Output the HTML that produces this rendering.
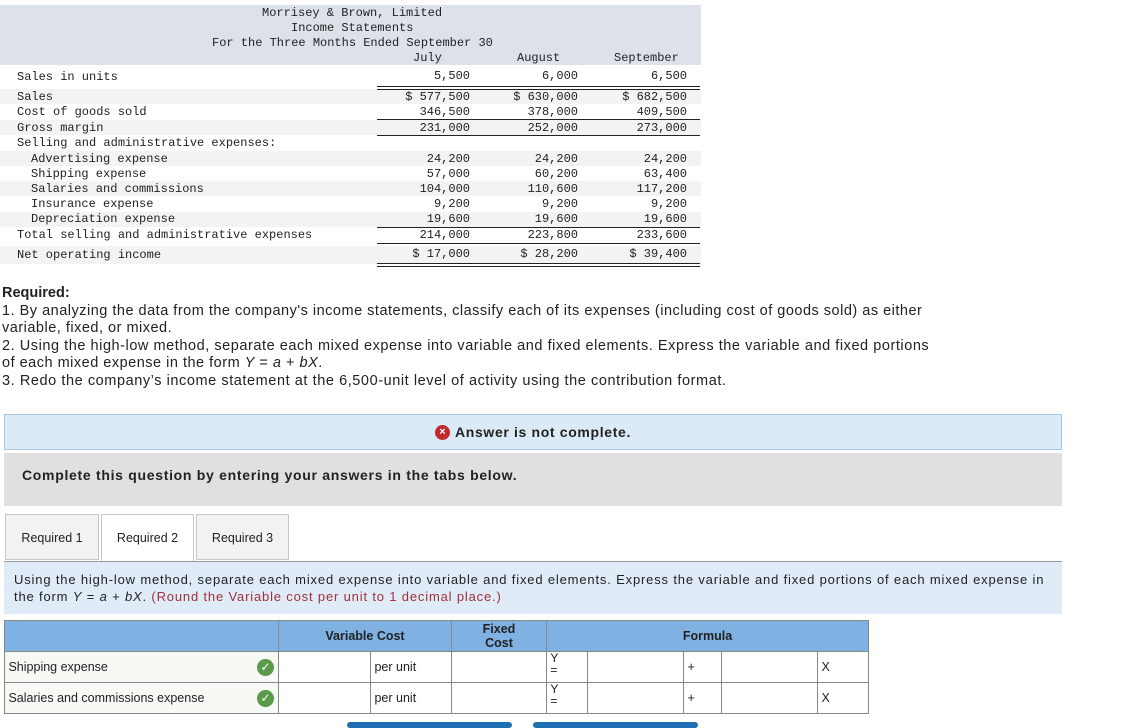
<!DOCTYPE html>
<html><head><meta charset="utf-8"><style>
body{margin:0;width:1132px;height:725px;overflow:hidden;background:#fff;position:relative;font-family:"Liberation Sans",sans-serif}
.a{position:absolute}
.m{position:absolute;font-family:"Liberation Mono",monospace;font-size:12px;color:#222;white-space:pre;line-height:14px}
.r{text-align:right;width:100px}
.hl{position:absolute;height:1px;background:#222}
.t{font-size:14.5px;color:#222;line-height:17.5px;letter-spacing:0.5px;white-space:nowrap}
.tab{position:absolute;top:514px;height:46px;border:1px solid #c6c6c6;background:#f2f2f2;font-size:12.5px;color:#222;line-height:46px;text-align:center;box-sizing:border-box}
td{border:1px solid #888;padding:0;font-size:12.5px;color:#222}
.bg{position:absolute;left:0;width:701px;background:#f3f3f3}
</style></head><body>
<div class="a" style="left:0;top:5px;width:701px;height:60px;background:#dde1e9"></div>
<div class="bg" style="top:89px;height:15px"></div>
<div class="bg" style="top:120px;height:15px"></div>
<div class="bg" style="top:151px;height:15px"></div>
<div class="bg" style="top:181px;height:15px"></div>
<div class="bg" style="top:212px;height:15px"></div>
<div class="bg" style="top:246px;height:18px"></div>
<div class="m" style="left:262px;top:6px">Morrisey &amp; Brown, Limited</div>
<div class="m" style="left:291px;top:21px">Income Statements</div>
<div class="m" style="left:212px;top:36px">For the Three Months Ended September 30</div>
<div class="m" style="left:413px;top:51px">July</div>
<div class="m" style="left:517px;top:51px">August</div>
<div class="m" style="left:614px;top:51px">September</div>

<div class="m" style="left:17px;top:70px">Sales in units</div>
<div class="m r" style="left:370px;top:69px">5,500</div><div class="m r" style="left:478px;top:69px">6,000</div><div class="m r" style="left:587px;top:69px">6,500</div>

<div class="m" style="left:17px;top:90px">Sales</div>
<div class="m r" style="left:370px;top:90px">$ 577,500</div><div class="m r" style="left:478px;top:90px">$ 630,000</div><div class="m r" style="left:587px;top:90px">$ 682,500</div>

<div class="m" style="left:17px;top:105px">Cost of goods sold</div>
<div class="m r" style="left:370px;top:105px">346,500</div><div class="m r" style="left:478px;top:105px">378,000</div><div class="m r" style="left:587px;top:105px">409,500</div>

<div class="m" style="left:17px;top:121px">Gross margin</div>
<div class="m r" style="left:370px;top:121px">231,000</div><div class="m r" style="left:478px;top:121px">252,000</div><div class="m r" style="left:587px;top:121px">273,000</div>

<div class="m" style="left:17px;top:136px">Selling and administrative expenses:</div>

<div class="m" style="left:31px;top:152px">Advertising expense</div>
<div class="m r" style="left:370px;top:152px">24,200</div><div class="m r" style="left:478px;top:152px">24,200</div><div class="m r" style="left:587px;top:152px">24,200</div>

<div class="m" style="left:31px;top:167px">Shipping expense</div>
<div class="m r" style="left:370px;top:167px">57,000</div><div class="m r" style="left:478px;top:167px">60,200</div><div class="m r" style="left:587px;top:167px">63,400</div>

<div class="m" style="left:31px;top:182px">Salaries and commissions</div>
<div class="m r" style="left:370px;top:182px">104,000</div><div class="m r" style="left:478px;top:182px">110,600</div><div class="m r" style="left:587px;top:182px">117,200</div>

<div class="m" style="left:31px;top:197px">Insurance expense</div>
<div class="m r" style="left:370px;top:197px">9,200</div><div class="m r" style="left:478px;top:197px">9,200</div><div class="m r" style="left:587px;top:197px">9,200</div>

<div class="m" style="left:31px;top:212px">Depreciation expense</div>
<div class="m r" style="left:370px;top:212px">19,600</div><div class="m r" style="left:478px;top:212px">19,600</div><div class="m r" style="left:587px;top:212px">19,600</div>

<div class="m" style="left:17px;top:228px">Total selling and administrative expenses</div>
<div class="m r" style="left:370px;top:228px">214,000</div><div class="m r" style="left:478px;top:228px">223,800</div><div class="m r" style="left:587px;top:228px">233,600</div>

<div class="m" style="left:17px;top:248px">Net operating income</div>
<div class="m r" style="left:370px;top:247px">$ 17,000</div><div class="m r" style="left:478px;top:247px">$ 28,200</div><div class="m r" style="left:587px;top:247px">$ 39,400</div>

<div class="hl" style="left:377px;top:86px;width:323px"></div><div class="hl" style="left:377px;top:89px;width:323px"></div>
<div class="hl" style="left:377px;top:119px;width:323px"></div>
<div class="hl" style="left:377px;top:135px;width:323px"></div>
<div class="hl" style="left:377px;top:227px;width:323px"></div>
<div class="hl" style="left:377px;top:243px;width:323px"></div>
<div class="hl" style="left:377px;top:263px;width:323px"></div><div class="hl" style="left:377px;top:266px;width:323px"></div>

<div class="a t" style="left:2px;top:285px"><b style="letter-spacing:0">Required:</b><br>1. By analyzing the data from the company's income statements, classify each of its expenses (including cost of goods sold) as either<br>variable, fixed, or mixed.<br><span style="letter-spacing:0.55px">2. Using the high-low method, separate each mixed expense into variable and fixed elements. Express the variable and fixed portions</span><br>of each mixed expense in the form <i>Y</i> = <i>a</i> + <i>bX</i>.<br><span style="letter-spacing:0.57px">3. Redo the company’s income statement at the 6,500-unit level of activity using the contribution format.</span></div>

<div class="a" style="left:4px;top:414px;width:1056px;height:34px;background:#dceaf7;border:1px solid #a9c6e0"></div>
<div class="a" style="left:435px;top:425px;width:15px;height:15px;border-radius:50%;background:#c0282d;color:#fff;font-size:11px;line-height:15px;text-align:center;font-weight:bold">×</div>
<div class="a" style="left:455px;top:424px;font-size:14px;font-weight:bold;color:#222;letter-spacing:0.65px">Answer is not complete.</div>
<div class="a" style="left:4px;top:453px;width:1058px;height:53px;background:#e0e0e0"></div>
<div class="a" style="left:22px;top:467px;font-size:14px;font-weight:bold;color:#222;letter-spacing:0.7px">Complete this question by entering your answers in the tabs below.</div>
<div class="tab" style="left:5px;width:94px">Required 1</div>
<div class="tab" style="left:101px;width:93px;background:#fff;border-bottom:none;height:48px">Required 2</div>
<div class="tab" style="left:196px;width:93px">Required 3</div>
<div class="a" style="left:4px;top:561px;width:1058px;height:52px;background:#dfecf8;border-top:1px solid #999"></div>
<div class="a" style="left:14px;top:572px;font-size:13px;line-height:16.5px;color:#222;letter-spacing:0.83px;white-space:nowrap">Using the high-low method, separate each mixed expense into variable and fixed elements. Express the variable and fixed portions of each mixed expense in<br>the form <i>Y</i> = <i>a</i> + <i>bX</i>. <span style="color:#a0303a">(Round the Variable cost per unit to 1 decimal place.)</span></div>

<table class="a" style="left:4px;top:620px;border-collapse:collapse;width:865px">
<tr style="height:31px;background:#7fb1e3;font-weight:bold;text-align:center">
<td style="width:273px"></td><td colspan="2">Variable Cost</td><td style="width:94px;line-height:14px">Fixed<br>Cost</td><td colspan="5">Formula</td></tr>
<tr style="height:31px"><td style="background:#f7f9f4;position:relative">&nbsp;Shipping expense<span style="position:absolute;left:252px;top:7px;width:17px;height:17px;border-radius:50%;background:#5a9a4a;color:#fff;font-size:12px;line-height:17px;text-align:center">✓</span></td><td style="width:91px"></td><td style="width:80px">&nbsp;per unit</td><td></td><td style="width:40px;font-size:12px;line-height:12px;vertical-align:top">&nbsp;Y<br>&nbsp;=</td><td style="width:95px"></td><td style="width:37px">&nbsp;+</td><td style="width:95px"></td><td>&nbsp;X</td></tr>
<tr style="height:31px"><td style="background:#f7f9f4;position:relative">&nbsp;Salaries and commissions expense<span style="position:absolute;left:252px;top:7px;width:17px;height:17px;border-radius:50%;background:#5a9a4a;color:#fff;font-size:12px;line-height:17px;text-align:center">✓</span></td><td></td><td>&nbsp;per unit</td><td></td><td style="font-size:12px;line-height:12px;vertical-align:top">&nbsp;Y<br>&nbsp;=</td><td></td><td>&nbsp;+</td><td></td><td>&nbsp;X</td></tr>
</table>
<div class="a" style="left:347px;top:722px;width:165px;height:6px;background:#1f6fb5;border-radius:3px"></div>
<div class="a" style="left:533px;top:722px;width:165px;height:6px;background:#1f6fb5;border-radius:3px"></div>
</body></html>
